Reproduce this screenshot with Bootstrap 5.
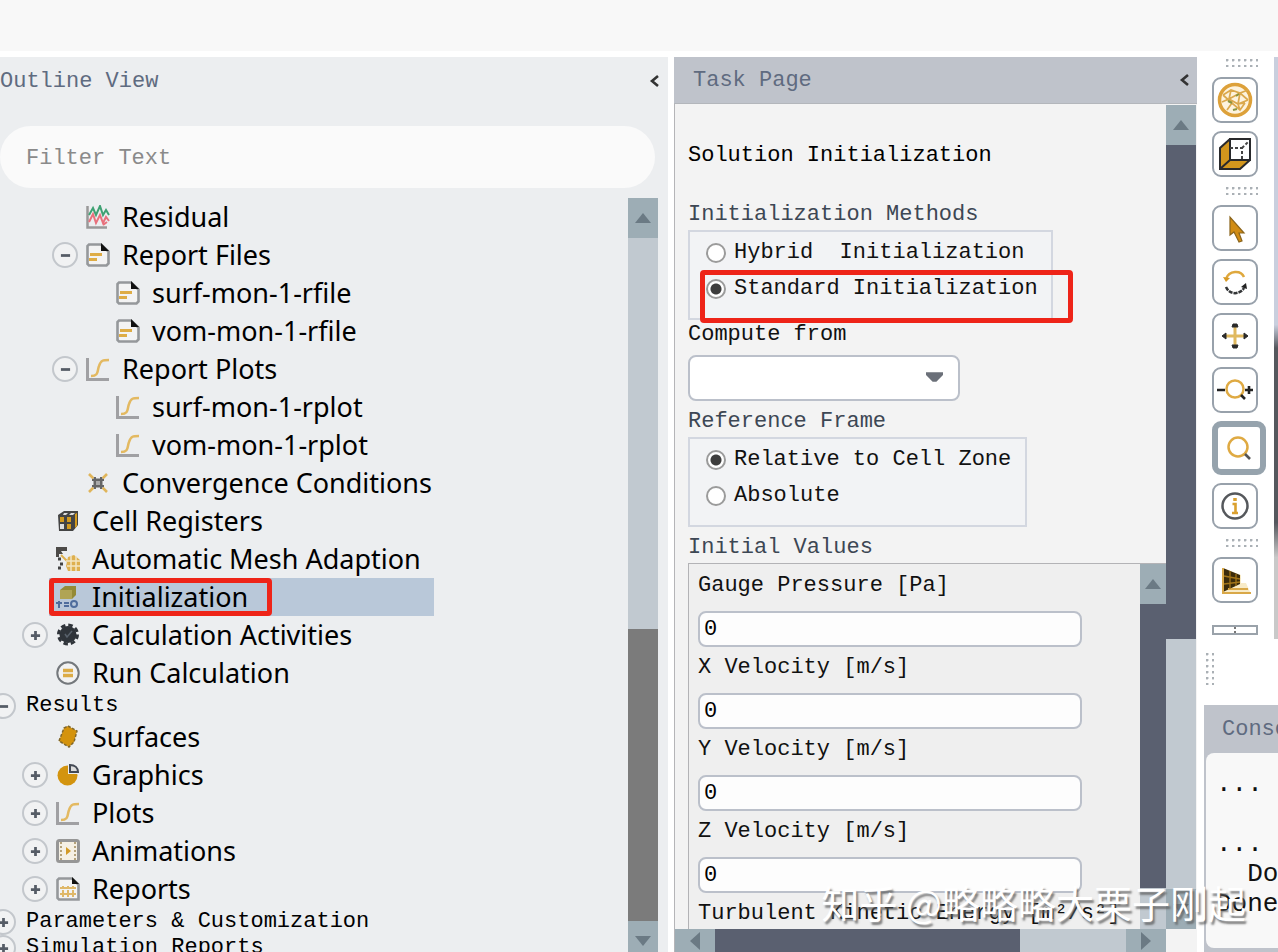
<!DOCTYPE html>
<html lang="en">
<head>
<meta charset="utf-8">
<meta name="viewport" content="width=device-width, initial-scale=1">
<title>Solution Initialization</title>
<link href="https://cdn.jsdelivr.net/npm/bootstrap@5.3.0/dist/css/bootstrap.min.css" rel="stylesheet">
<style>
:root { --ink: #5f6b80; --bar: #bfc3cb; --track: #c1c9d0; --knob: #9dadb5; --thumb: #5a6070; --red: #ee2418; --line: #bbc0ca; }
body { font-family: "Liberation Mono", monospace; font-size: 22px; line-height: 30px; color: #111; background: #fff; }
.shell { height: 100vh; }
.topband { height: 51px; flex: none; background: #f8f8f8; margin-bottom: 6px; }
.workspace { display: grid; grid-template-columns: minmax(0, 668fr) minmax(0, 523fr) 75px; column-gap: 6px; }
.pane-title { height: 47px; padding-top: 2px; color: var(--ink); font-weight: 500; flex: none; }
.fold { border: 0; background: none; padding: 0; width: 12px; height: 18px; line-height: 0; }
.fold svg { width: 12px; height: 14px; }

/* outline */
.outline { background: #eceef0; }
.filter { height: 62px; border-radius: 31px; border: 0; background: #fafafa; padding: 2px 26px 0; font-size: 22px; margin: 22px 13px 10px 0; width: auto; color: #333; }
.filter::placeholder { color: #8a8a8a; opacity: 1; }
.tree { font-family: "Noto Sans", sans-serif; font-size: 27px; color: #000; }
.node { height: 38px; padding-left: 22px; white-space: nowrap; flex: none; position: relative; }
.node.deep1 { padding-left: 52px; }
.node.deep2 { padding-left: 82px; }
.node .slot { width: 26px; height: 26px; margin-right: 8px; flex: none; }
.node .ico { width: 24px; height: 24px; margin-right: 12px; flex: none; }
.root-node { font-family: "Liberation Mono", monospace; font-size: 22px; height: 26px; padding: 2px 0 0; font-weight: 500; }
.root-node .slot { margin: 0 10px 0 -10px; }
.toggle { border: 2px solid #c3c7cc; border-radius: 50%; background: #f1f2f3; padding: 0; display: flex; align-items: center; justify-content: center; }
.toggle svg { width: 11px; height: 11px; }
.picked { margin-left: 49px; padding-left: 7px; background: #b9c8d9; width: 385px; }
.callout { position: absolute; border: 5px solid var(--red); border-radius: 4px; pointer-events: none; }
.callout-node { inset: 0 162px 0 0; }
.callout-radio { inset: -1px -22px -16px 10px; }

/* scroll bars */
.vbar { background: var(--track); flex: none; display: flex; flex-direction: column; }
.vbar .end, .hbar .end { flex: none; background: var(--knob); border: 0; padding: 0; display: flex; align-items: center; justify-content: center; color: #6b7a84; }
.vbar .end { height: 40px; }
.vbar .end svg { width: 16px; height: 10px; }
.hbar { height: 23px; display: flex; background: var(--track); }
.hbar .end { width: 40px; }
.hbar .end svg { width: 10px; height: 18px; }
.w30 { width: 30px; } .w26 { width: 26px; }
.outline-bar { margin-right: 10px; }
.outline-bar .end-cut { height: 31px; padding-top: 8px; }
.page-bar { margin: 1px 1px 23px 0; }

/* task page */
.task .pane-title { background: var(--bar); padding: 2px 7px 0 19px; border-bottom: 1px solid #b3b6bb; }
.task-body { background: #f3f3f3; border-left: 1px solid #b5b5b8; }
.form-area { padding: 36px 0 0 13px; }
.heading { font-size: 22px; line-height: 32px; margin: 0 0 28px; color: #000; font-weight: 500; }
.group-name { font-size: 22px; line-height: 30px; font-weight: 500; margin: 0; color: #3d4754; float: none; }
.values-name { margin-top: 6px; }
.choices { border: 2px solid #d3d7e0; height: 90px; padding-top: 3px; background: #f2f3f5; }
.choice { height: 36px; display: flex; align-items: center; padding-left: 16px; position: relative; white-space: pre; color: #111; }
.choice .form-check-input { width: 20px; height: 20px; margin: 0 8px 0 0; border: 2px solid #9b9b9b; background-color: #fff; flex: none; }
.choice .form-check-input:checked { background-color: #fff; background-image: radial-gradient(circle, #3d3d3d 0 5px, transparent 6px); }
.methods { width: 365px; } .frames { width: 339px; }
.compute { width: 272px; height: 46px; border: 2px solid var(--line); border-radius: 8px; margin: 5px 0 6px; background-color: #fff;
  --bs-form-select-bg-img: url("data:image/svg+xml,%3csvg xmlns='http://www.w3.org/2000/svg' viewBox='0 0 18 12'%3e%3cpath d='M0 1h18v3l-7 7H7L0 4z' fill='%236b7079'/%3e%3c/svg%3e");
  background-size: 17px 12px; background-position: right 15px top 14px; }
.values { border: 1px solid #b3b3b6; border-right: 0; border-bottom: 0; background: #efefef; min-height: 0; }
.fields { padding: 7px 0 0 9px; min-height: 0; }
.fields label { display: block; line-height: 30px; margin-bottom: 10px; white-space: nowrap; }
.fields .form-control { width: 384px; height: 36px; padding: 0 4px; border: 2px solid var(--line); border-radius: 8px; font-size: 22px; margin-bottom: 6px; color: #000; background: #fdfdfd; }

/* tool strip and console */
.side { margin-left: 1px; min-width: 0; }
.tools { padding: 2px 0 0 8px; height: 582px; gap: 8px; }
.tool { width: 46px; height: 46px; padding: 0; border: 2px solid #98a1ab; border-radius: 9px; background: #fff; display: flex; align-items: center; justify-content: center; flex: none; }
.tool svg { width: 38px; height: 38px; }
.tool.on { width: 54px; height: 54px; border-width: 6px; border-color: #96a3ad; }
.grip { background: radial-gradient(circle at 1px 1px, #aab0b5 1px, transparent 2px) 0 0 / 6px 6px; flex: none; }
.grip-h { width: 32px; height: 8px; margin: 2px 0 2px 14px; }
.grip-h:first-child { margin-top: 0; }
.grip-v { width: 8px; height: 32px; margin: 14px 0 20px 2px; }
.stub { width: 46px; height: 10px; flex: none; border: 2px solid #9aa2aa; margin-top: 14px; display: flex; justify-content: center; }
.stub span { border-left: 2px dotted #777; }
.viewport { width: 4px; background: linear-gradient(#c9cfde 0 46%, #55585e 50% 80%, #c9c9c9 86%); }
.console { background: var(--bar); padding-left: 2px; }
.console .pane-title { height: 48px; padding-left: 16px; }
.console-out { background: #f8f8f8; border-radius: 8px 0 0 8px; font-size: 26px; line-height: 30px; padding: 16px 0 0 10px; margin: 0 0 4px; color: #111; }
.stamp { position: absolute; right: 32px; bottom: 28px; font: 400 38px/44px "Noto Sans CJK SC", sans-serif; color: #fff; text-shadow: 2px 3px 2px rgba(90, 90, 90, .75); white-space: nowrap; pointer-events: none; }
</style>
</head>
<body>
<svg class="d-none" xmlns="http://www.w3.org/2000/svg">
  <symbol id="up" viewBox="0 0 16 10"><path d="M8 0L16 10H0z" fill="currentColor"/></symbol>
  <symbol id="down" viewBox="0 0 16 10"><path d="M8 10L16 0H0z" fill="currentColor"/></symbol>
  <symbol id="left" viewBox="0 0 10 18"><path d="M0 9L10 0V18z" fill="currentColor"/></symbol>
  <symbol id="right" viewBox="0 0 10 18"><path d="M10 9L0 0V18z" fill="currentColor"/></symbol>
  <symbol id="chev" viewBox="0 0 12 14"><path d="M10 1L4 6l6 5" fill="none" stroke="#333" stroke-width="2.6"/></symbol>
  <symbol id="minus" viewBox="0 0 12 12"><path d="M1 6h10" stroke="#555c66" stroke-width="3"/></symbol>
  <symbol id="plus" viewBox="0 0 12 12"><path d="M1 6h10M6 1v10" stroke="#555c66" stroke-width="3"/></symbol>
  <symbol id="residual" viewBox="0 0 24 24"><path d="M1.500 1v21.500H21" fill="none" stroke="#999" stroke-width="2.500"/><path d="M3 10l4-7 3 7 4-9 3 9 3-5 3 5" fill="none" stroke="#3fa173" stroke-width="2"/><path d="M3 17l4-8 3 9 4-8 3 8 3-6 3 4M17 20l4-3" fill="none" stroke="#e8707c" stroke-width="2"/></symbol>
  <symbol id="file" viewBox="0 0 24 24"><path d="M3 1.500h12l7.500 7v12l-2 2H3L1.500 21V3z" fill="#f3f3f3" stroke="#95989b" stroke-width="2.600"/><path d="M15 0l8 8h-8z" fill="#111"/><path d="M4 11.500h12M3 16.500h8" stroke="#deac45" stroke-width="3"/></symbol>
  <symbol id="plot" viewBox="0 0 24 24"><path d="M1.500 1v21.500H23" fill="none" stroke="#a0a0a3" stroke-width="3"/><path d="M5 19c8 0 6-5 8-10 2-6 4-6 10-6" fill="none" stroke="#e3b961" stroke-width="2.500"/></symbol>
  <symbol id="converge" viewBox="0 0 24 24"><path d="M3 3l5 5M21 3l-5 5M3 21l5-5M21 21l-5-5" stroke="#e0b55b" stroke-width="2.600"/><path d="M7 7h10v10H7z" fill="#aaa"/><path d="M9 6v12M15 6v12M6 9h12M6 15h12" stroke="#666" stroke-width="2"/></symbol>
  <symbol id="cells" viewBox="0 0 24 24"><path d="M2 6l6-4h14v14l-5 6H3z" fill="#444"/><path d="M4 8h4v5H4zM11 15h4v5h-4zM19 5l2-1v13l-2 2z" fill="#d39a1e"/><path d="M11 8h4v5h-4z" fill="#d39a1e"/><path d="M4 15h4v5H4zM8 4h4l-2 2H7zM15 4h4l-2 2h-4z" fill="#ddd"/></symbol>
  <symbol id="adapt" viewBox="0 0 24 24"><path d="M0 0h11v4H5l2 3H3v3H0z" fill="#4c4a48"/><path d="M5 8l7 7" stroke="#deb04f" stroke-width="2"/><path d="M2 12h3M4 17h3M2 21h3" stroke="#444" stroke-width="3"/><path d="M12 10l6-2 6 5v11H12l-2-5z" fill="#deb04f"/><path d="M15 9v15M20 9v15M10 14h14M11 19h13" stroke="#f3e5c2" stroke-width="1.500"/></symbol>
  <symbol id="init" viewBox="0 0 24 24"><path d="M4 5l5-4h11v9l-4 4H4z" fill="#948a36"/><path d="M4 5h12v9H4z" fill="#b0a455"/><path d="M3 16v7M0 18h6M8 18h5M8 21h5" stroke="#4f6d9c" stroke-width="2"/><circle cx="18" cy="19" r="3" fill="none" stroke="#4f6d9c" stroke-width="2"/></symbol>
  <symbol id="gear" viewBox="0 0 24 24"><circle cx="12" cy="11.500" r="8.500" fill="#2f343a"/><circle cx="12" cy="11.500" r="9.500" fill="none" stroke="#2f343a" stroke-width="3" stroke-dasharray="4.500 2.960"/><path d="M9 11l2 3 5-6" fill="none" stroke="#58616b" stroke-width="1.500"/></symbol>
  <symbol id="run" viewBox="0 0 24 24"><circle cx="12" cy="12" r="10.700" fill="#f2f2f2" stroke="#74787c" stroke-width="2"/><path d="M7 9.500h10M7 14.500h10" stroke="#dcab45" stroke-width="3.500"/></symbol>
  <symbol id="surface" viewBox="0 0 24 24"><path d="M8 3l4-2 9 5-3 11-5 5-10-6z" fill="#d4930d" stroke="#80672b" stroke-width="1.500" stroke-dasharray="3 1.500"/></symbol>
  <symbol id="pie" viewBox="0 0 24 24"><circle cx="11.500" cy="12.500" r="10" fill="#d3940f"/><path d="M12 1v10h11A10 10 0 0 0 12 1z" fill="#eceef0"/><path d="M14 2v7h8c0-4-3-7-8-7z" fill="#ddd" stroke="#444a55" stroke-width="2"/></symbol>
  <symbol id="film" viewBox="0 0 24 24"><rect x="1.500" y="1.500" width="21" height="21" rx="2" fill="#f5f0e4" stroke="#969696" stroke-width="3"/><path d="M5 3v18M19 3v18" stroke="#b5a27a" stroke-width="2" stroke-dasharray="2 2"/><path d="M10 8l5 4-5 4z" fill="#d39a26"/></symbol>
  <symbol id="report" viewBox="0 0 24 24"><path d="M3 1.500h13l6.500 6v15H3L1.500 21V3z" fill="#f3f3f3" stroke="#95989b" stroke-width="2.600"/><path d="M16 0l7 7h-7z" fill="#111"/><path d="M4 11h16M4 17h16" stroke="#dfb869" stroke-width="2"/><path d="M7 9v11M12 9v11M17 9v11" stroke="#dfb869" stroke-width="2" stroke-dasharray="3 1"/></symbol>
</svg>

<div class="shell d-flex flex-column overflow-hidden position-relative">
  <header class="topband"></header>
  <main class="workspace flex-grow-1 overflow-hidden">

    <section class="outline d-flex flex-column overflow-hidden">
      <div class="pane-title d-flex align-items-center justify-content-between pe-2">
        <span>Outline View</span>
        <button class="fold" type="button" aria-label="Collapse outline"><svg><use href="#chev"/></svg></button>
      </div>
      <input class="form-control filter flex-shrink-0" type="text" placeholder="Filter Text" aria-label="Filter Text">
      <div class="d-flex flex-grow-1 overflow-hidden">
        <div class="tree flex-grow-1 d-flex flex-column overflow-hidden">
          <div class="node deep1 d-flex align-items-center"><span class="slot"></span><svg class="ico"><use href="#residual"/></svg>Residual</div>
          <div class="node deep1 d-flex align-items-center"><button class="slot toggle" type="button" aria-label="Collapse Report Files"><svg><use href="#minus"/></svg></button><svg class="ico"><use href="#file"/></svg>Report Files</div>
          <div class="node deep2 d-flex align-items-center"><span class="slot"></span><svg class="ico"><use href="#file"/></svg>surf-mon-1-rfile</div>
          <div class="node deep2 d-flex align-items-center"><span class="slot"></span><svg class="ico"><use href="#file"/></svg>vom-mon-1-rfile</div>
          <div class="node deep1 d-flex align-items-center"><button class="slot toggle" type="button" aria-label="Collapse Report Plots"><svg><use href="#minus"/></svg></button><svg class="ico"><use href="#plot"/></svg>Report Plots</div>
          <div class="node deep2 d-flex align-items-center"><span class="slot"></span><svg class="ico"><use href="#plot"/></svg>surf-mon-1-rplot</div>
          <div class="node deep2 d-flex align-items-center"><span class="slot"></span><svg class="ico"><use href="#plot"/></svg>vom-mon-1-rplot</div>
          <div class="node deep1 d-flex align-items-center"><span class="slot"></span><svg class="ico"><use href="#converge"/></svg>Convergence Conditions</div>
          <div class="node d-flex align-items-center"><span class="slot"></span><svg class="ico"><use href="#cells"/></svg>Cell Registers</div>
          <div class="node d-flex align-items-center"><span class="slot"></span><svg class="ico"><use href="#adapt"/></svg>Automatic Mesh Adaption</div>
          <div class="node picked d-flex align-items-center"><svg class="ico"><use href="#init"/></svg>Initialization<span class="callout callout-node"></span></div>
          <div class="node d-flex align-items-center"><button class="slot toggle" type="button" aria-label="Expand Calculation Activities"><svg><use href="#plus"/></svg></button><svg class="ico"><use href="#gear"/></svg>Calculation Activities</div>
          <div class="node d-flex align-items-center"><span class="slot"></span><svg class="ico"><use href="#run"/></svg>Run Calculation</div>
          <div class="node root-node d-flex align-items-center"><button class="slot toggle" type="button" aria-label="Collapse Results"><svg><use href="#minus"/></svg></button>Results</div>
          <div class="node d-flex align-items-center"><span class="slot"></span><svg class="ico"><use href="#surface"/></svg>Surfaces</div>
          <div class="node d-flex align-items-center"><button class="slot toggle" type="button" aria-label="Expand Graphics"><svg><use href="#plus"/></svg></button><svg class="ico"><use href="#pie"/></svg>Graphics</div>
          <div class="node d-flex align-items-center"><button class="slot toggle" type="button" aria-label="Expand Plots"><svg><use href="#plus"/></svg></button><svg class="ico"><use href="#plot"/></svg>Plots</div>
          <div class="node d-flex align-items-center"><button class="slot toggle" type="button" aria-label="Expand Animations"><svg><use href="#plus"/></svg></button><svg class="ico"><use href="#film"/></svg>Animations</div>
          <div class="node d-flex align-items-center"><button class="slot toggle" type="button" aria-label="Expand Reports"><svg><use href="#plus"/></svg></button><svg class="ico"><use href="#report"/></svg>Reports</div>
          <div class="node root-node d-flex align-items-center"><button class="slot toggle" type="button" aria-label="Expand Parameters"><svg><use href="#plus"/></svg></button>Parameters &amp; Customization</div>
          <div class="node root-node d-flex align-items-center"><button class="slot toggle" type="button" aria-label="Expand Simulation Reports"><svg><use href="#plus"/></svg></button>Simulation Reports</div>
        </div>
        <div class="vbar w30 outline-bar">
          <button class="end" type="button" aria-label="Scroll up"><svg><use href="#up"/></svg></button>
          <div style="flex:390 0 0"></div>
          <div style="flex:292 0 0;background:#7b7b7b"></div>
          <button class="end end-cut" type="button" aria-label="Scroll down"><svg><use href="#down"/></svg></button>
        </div>
      </div>
    </section>

    <section class="task d-flex flex-column overflow-hidden">
      <div class="pane-title d-flex align-items-center justify-content-between">
        <span>Task Page</span>
        <button class="fold" type="button" aria-label="Collapse task page"><svg><use href="#chev"/></svg></button>
      </div>
      <div class="task-body d-flex flex-grow-1 overflow-hidden">
        <div class="d-flex flex-column flex-grow-1 overflow-hidden">
          <form class="form-area d-flex flex-column flex-grow-1 overflow-hidden">
            <h1 class="heading">Solution Initialization</h1>
            <fieldset class="flex-shrink-0">
              <legend class="group-name">Initialization Methods</legend>
              <div class="choices methods">
                <div class="choice"><input class="form-check-input" type="radio" name="method" id="m1"><label for="m1">Hybrid  Initialization</label></div>
                <div class="choice"><input class="form-check-input" type="radio" name="method" id="m2" checked><label for="m2">Standard Initialization</label><span class="callout callout-radio"></span></div>
              </div>
            </fieldset>
            <label for="compute">Compute from</label>
            <select class="form-select compute flex-shrink-0" id="compute"><option></option></select>
            <fieldset class="flex-shrink-0">
              <legend class="group-name">Reference Frame</legend>
              <div class="choices frames">
                <div class="choice"><input class="form-check-input" type="radio" name="frame" id="f1" checked><label for="f1">Relative to Cell Zone</label></div>
                <div class="choice"><input class="form-check-input" type="radio" name="frame" id="f2"><label for="f2">Absolute</label></div>
              </div>
            </fieldset>
            <h2 class="group-name values-name">Initial Values</h2>
            <div class="values d-flex flex-grow-1 overflow-hidden">
              <div class="fields flex-grow-1 overflow-hidden">
                <label for="p">Gauge Pressure [Pa]</label><input class="form-control" id="p" type="text" value="0">
                <label for="vx">X Velocity [m/s]</label><input class="form-control" id="vx" type="text" value="0">
                <label for="vy">Y Velocity [m/s]</label><input class="form-control" id="vy" type="text" value="0">
                <label for="vz">Z Velocity [m/s]</label><input class="form-control" id="vz" type="text" value="0">
                <label>Turbulent Kinetic Energy [m²/s²]</label>
              </div>
              <div class="vbar w26">
                <button class="end" type="button" aria-label="Scroll values up"><svg><use href="#up"/></svg></button>
                <div style="flex:283 0 0;background:var(--thumb)"></div>
                <div style="flex:41 0 0"></div>
              </div>
            </div>
          </form>
          <div class="hbar">
            <button class="end" type="button" aria-label="Scroll left"><svg><use href="#left"/></svg></button>
            <div style="flex:304 0 0;background:var(--thumb)"></div>
            <div style="flex:106 0 0"></div>
            <button class="end" type="button" aria-label="Scroll right"><svg><use href="#right"/></svg></button>
          </div>
        </div>
        <div class="vbar w30 page-bar">
          <button class="end" type="button" aria-label="Scroll page up"><svg><use href="#up"/></svg></button>
          <div style="flex:494 0 0;background:var(--thumb)"></div>
          <div style="flex:250 0 0"></div>
          <button class="end" type="button" aria-label="Scroll page down"><svg><use href="#down"/></svg></button>
        </div>
      </div>
    </section>

    <aside class="side d-flex flex-column overflow-hidden">
      <div class="d-flex justify-content-between flex-shrink-0">
        <div class="tools d-flex flex-column">
          <span class="grip grip-h"></span>
          <button class="tool" type="button" aria-label="Mesh"><svg viewBox="0 0 38 38"><circle cx="19" cy="19" r="15.500" fill="#fdf3de" stroke="#dda13a" stroke-width="3.500"/><path d="M7 14l8-5 9 3 8-3M6 21l7-3 9 5 10-4M11 29l5-7 8 7 5-7M15 9l-2 9 3 4M24 12l-2 11 2 6M13 18l11-6 8 7M16 22l-9-8M22 23l7-1" fill="none" stroke="#dba94e" stroke-width="1.700"/><path d="M12 20l4 2M20 15l3-2M17 29l4-1" stroke="#8a9440" stroke-width="2"/></svg></button>
          <button class="tool" type="button" aria-label="View box"><svg viewBox="0 0 38 38"><path d="M4 13L14 4v21L4 34z" fill="#d2961d"/><path d="M4 34l10-9h20l-10 9z" fill="#d2961d"/><path d="M14 4h20v21H14z" fill="#fff"/><path d="M14 4h20v21H14zM14 4L4 13v21h20l10-9M4 34l10-9" fill="none" stroke="#28292c" stroke-width="2"/><path d="M14 13h12v12M26 13l7-7" fill="none" stroke="#444" stroke-width="2" stroke-dasharray="3 2"/></svg></button>
          <span class="grip grip-h"></span>
          <button class="tool" type="button" aria-label="Select"><svg viewBox="0 0 38 38"><path d="M14 8v18l4-3 5 10 3-1-3-8h5z" fill="#d18c14" stroke="#8a641c" stroke-width="1.200"/></svg></button>
          <button class="tool" type="button" aria-label="Rotate"><svg viewBox="0 0 38 38"><path d="M10 16C13 7 25 7 28 14" fill="none" stroke="#dfa83d" stroke-width="2.500"/><path d="M7 14l7 1-4 4z" fill="#d89a25"/><path d="M10 24c4 9 15 7 18 1" fill="none" stroke="#343638" stroke-width="2.500" stroke-dasharray="4 1"/><path d="M31 26l-1-6-5 4z" fill="#222"/></svg></button>
          <button class="tool" type="button" aria-label="Pan"><svg viewBox="0 0 38 38"><path d="M19 9v20M9 19h20" stroke="#e0b95f" stroke-width="3"/><path d="M17 7h4l1 3h-6zM17 31h4l1-3h-6zM6 19l4-3v6zM32 19l-4-3v6z" fill="#2b2b2b" stroke="#2b2b2b"/></svg></button>
          <button class="tool" type="button" aria-label="Zoom in and out"><svg viewBox="0 0 38 38"><circle cx="19" cy="18" r="8.500" fill="none" stroke="#dfaa43" stroke-width="2.500"/><path d="M1 19h8M29 19h8M33 15v8M25 24l4 4" stroke="#222" stroke-width="2.600"/></svg></button>
          <button class="tool on" type="button" aria-label="Zoom"><svg viewBox="0 0 38 38"><circle cx="18" cy="18" r="9.500" fill="none" stroke="#dfaa43" stroke-width="2.500"/><path d="M25 25l5 5" stroke="#555" stroke-width="2.600"/></svg></button>
          <button class="tool" type="button" aria-label="Information"><svg viewBox="0 0 38 38"><circle cx="19" cy="19" r="12.500" fill="#fff" stroke="#55585c" stroke-width="2.500"/><path d="M16.500 17h3v9M16 26h6" fill="none" stroke="#daa02f" stroke-width="2.600"/><path d="M19 11v3" stroke="#daa02f" stroke-width="3.500"/></svg></button>
          <span class="grip grip-h"></span>
          <button class="tool" type="button" aria-label="Field view"><svg viewBox="0 0 38 38"><path d="M7 7l18 7v8h5l5 11H7z" fill="#f8ebc8"/><path d="M7 7l17 7v9L7 31z" fill="#3b2b0b"/><path d="M7 7v26M8 32h27M12 28h20" fill="none" stroke="#d9a848" stroke-width="2"/><path d="M8 15l16 3M8 23l16-2M14 10v18M20 13v12" stroke="#a37519" stroke-width="1.300"/></svg></button>
          <div class="stub"><span></span></div>
        </div>
        <div class="viewport"></div>
      </div>
      <span class="grip grip-v"></span>
      <div class="console d-flex flex-column flex-grow-1 overflow-hidden">
        <div class="pane-title d-flex align-items-center">Console</div>
        <pre class="console-out flex-grow-1 overflow-hidden">...

...
  Done
Done</pre>
      </div>
    </aside>
  </main>
  <div class="stamp">知乎 @略略略大栗子刚起</div>
</div>
<script src="https://cdn.jsdelivr.net/npm/bootstrap@5.3.0/dist/js/bootstrap.bundle.min.js"></script>
</body>
</html>
